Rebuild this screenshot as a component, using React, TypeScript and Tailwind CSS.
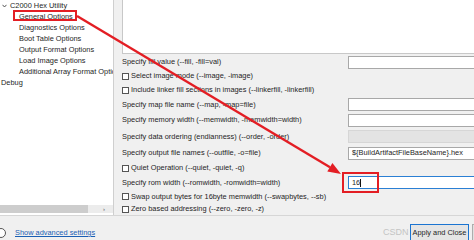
import React from "react";

function Input({ value, focused, disabled }: { value?: string; focused?: boolean; disabled?: boolean }) {
  const cls = disabled
    ? "h-[13px] w-[140px] shrink-0 bg-[#e3e3e3] border border-[#d6d6d6]"
    : focused
    ? "h-[13px] w-[140px] shrink-0 bg-white border border-[#2a7fd4] flex items-center pl-[3px]"
    : "h-[13px] w-[140px] shrink-0 bg-white border border-[#a8a8a8] flex items-center pl-[3px]";
  return (
    <div className={cls}>
      {value ? <span className="whitespace-nowrap">{value}</span> : null}
      {focused ? <span className="w-px h-[8px] bg-[#111]" /> : null}
    </div>
  );
}

function LabelRow({ h, label, input }: { h: string; label: string; input: React.ReactNode }) {
  return (
    <div className={`${h} flex items-center`}>
      <div className="w-[226px] shrink-0 whitespace-nowrap">{label}</div>
      {input}
    </div>
  );
}

function CheckRow({ h, label }: { h: string; label: string }) {
  return (
    <div className={`${h} flex items-center`}>
      <div className="w-[7px] h-[7px] border border-[#555] bg-white shrink-0" />
      <div className="ml-[2px] whitespace-nowrap">{label}</div>
    </div>
  );
}

export default function App() {
  const tree = [
    "General Options",
    "Diagnostics Options",
    "Boot Table Options",
    "Output Format Options",
    "Load Image Options",
    "Additional Array Format Options",
  ];
  return (
    <div className="relative w-[474px] h-[240px] overflow-hidden bg-[#f0f0f0] text-[7.4px] text-[#1e1e1e] font-['Liberation_Sans',Arial,sans-serif] leading-none">
      <div className="flex h-[215px]">
        {/* left tree */}
        <div className="w-[114px] shrink-0 bg-white border-r border-[#cfcfcf] flex flex-col overflow-hidden">
          <div className="flex-1 flex flex-col">
            <div className="h-[11px] flex items-center pl-[2px] whitespace-nowrap">
              <svg width="5" height="4" viewBox="0 0 5 4" className="shrink-0">
                <path d="M0.5 0.8 L2.5 3 L4.5 0.8" fill="none" stroke="#444" strokeWidth="0.9" />
              </svg>
              <span className="ml-[3px]">C2000 Hex Utility</span>
            </div>
            {tree.map((t) => (
              <div key={t} className="h-[11px] flex items-center pl-[19px] whitespace-nowrap">
                {t}
              </div>
            ))}
            <div className="h-[11px] flex items-center pl-[1px] whitespace-nowrap">Debug</div>
          </div>
          <div className="h-[8px] mb-[2px] flex items-center">
            <div className="w-[88px] h-full bg-[#cdcdcd]" />
            <div className="flex-1 h-full bg-[#ececec] flex items-center justify-end pr-[8px] text-[6px] text-[#555]">›</div>
          </div>
        </div>
        {/* right form */}
        <div className="flex-1 flex flex-col pl-[8px] overflow-hidden">
          <div className="h-[54px] shrink-0 bg-white border-l border-b border-[#c8c8c8]" />
          <div className="mt-[1px] flex flex-col">
            <LabelRow h="h-[14px]" label="Specify fill value (--fill, -fill=val)" input={<Input />} />
            <CheckRow h="h-[14px]" label="Select image mode (--image, -image)" />
            <CheckRow h="h-[14px]" label="Include linker fill sections in images (--linkerfill, -linkerfill)" />
            <LabelRow h="h-[15px]" label="Specify map file name (--map, -map=file)" input={<Input />} />
            <LabelRow h="h-[16px]" label="Specify memory width (--memwidth, -memwidth=width)" input={<Input />} />
            <LabelRow h="h-[17px]" label="Specify data ordering (endianness) (--order, -order)" input={<Input disabled />} />
            <LabelRow
              h="h-[16px]"
              label="Specify output file names (--outfile, -o=file)"
              input={<Input value="${BuildArtifactFileBaseName}.hex" />}
            />
            <CheckRow h="h-[14px]" label="Quiet Operation (--quiet, -quiet, -q)" />
            <LabelRow h="h-[15px]" label="Specify rom width (--romwidth, -romwidth=width)" input={<Input value="16" focused />} />
            <CheckRow h="h-[13px]" label="Swap output bytes for 16byte memwidth (--swapbytes, --sb)" />
            <CheckRow h="h-[12px]" label="Zero based addressing (--zero, -zero, -z)" />
          </div>
        </div>
      </div>
      {/* bottom bar */}
      <div className="h-[25px] border-t border-[#d6d6d6] flex items-start">
        <div className="mt-[12px] -ml-[4px] w-[10px] h-[10px] rounded-full border border-[#555] bg-white shrink-0" />
        <div className="mt-[13px] ml-[9px] text-[#1a5fb4] underline whitespace-nowrap">Show advanced settings</div>
        <div className="ml-auto -mr-[18px] mt-[8px] flex">
          <div className="w-[59px] h-[18px] border border-[#1b74d1] bg-[#e5e5e5] flex items-start justify-center pt-[4px] whitespace-nowrap">
            Apply and Close
          </div>
          <div className="ml-[3px] w-[20px] h-[18px] border border-[#adadad] bg-[#e1e1e1]" />
        </div>
      </div>
      {/* watermark */}
      <div className="absolute left-[383px] top-[228px] text-[9px] text-[#c4c4c4] whitespace-nowrap pointer-events-none">
        CSDN
      </div>
      {/* annotations */}
      <div className="absolute left-[13px] top-[10px] w-[64px] h-[11px] border-2 border-[#e31e24] pointer-events-none" />
      <div className="absolute left-[342px] top-[172px] w-[37px] h-[21px] border-2 border-[#e31e24] pointer-events-none" />
      <svg className="absolute left-0 top-0 pointer-events-none" width="474" height="240" viewBox="0 0 474 240">
        <line x1="77" y1="16" x2="330" y2="167.3" stroke="#e31e24" strokeWidth="2.4" />
        <polygon points="341,174 327.3,171.6 332.4,163" fill="#e31e24" />
      </svg>
    </div>
  );
}
